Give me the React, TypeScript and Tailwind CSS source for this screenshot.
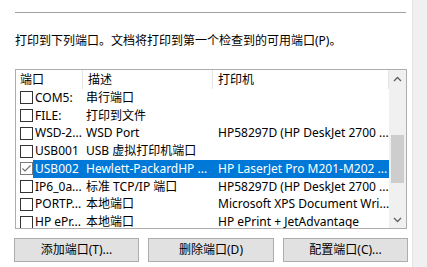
import React from "react";

type Row = {
  port: string;
  desc: string;
  printer: string;
  checked?: boolean;
  selected?: boolean;
};

const rows: Row[] = [
  { port: "COM5:", desc: "串行端口", printer: "" },
  { port: "FILE:", desc: "打印到文件", printer: "" },
  { port: "WSD-2...", desc: "WSD Port", printer: "HP58297D (HP DeskJet 2700 ..." },
  { port: "USB001", desc: "USB 虚拟打印机端口", printer: "" },
  {
    port: "USB002",
    desc: "Hewlett-PackardHP ...",
    printer: "HP LaserJet Pro M201-M202 ...",
    checked: true,
    selected: true,
  },
  { port: "IP6_0a...", desc: "标准 TCP/IP 端口", printer: "HP58297D (HP DeskJet 2700 ..." },
  { port: "PORTP...", desc: "本地端口", printer: "Microsoft XPS Document Wri..." },
  { port: "HP ePr...", desc: "本地端口", printer: "HP ePrint + JetAdvantage" },
];

function Checkbox({ checked }: { checked?: boolean }) {
  return (
    <span
      className={`flex h-[13px] w-[13px] shrink-0 items-center justify-center border bg-white ${
        checked ? "border-[#7a7a7a]" : "border-[#333333]"
      }`}
    >
      {checked && (
        <svg width="11" height="11" viewBox="0 0 11 11">
          <path d="M1.5 5.5 L4 8 L9.5 2.5" fill="none" stroke="#6d6d6d" strokeWidth="1.1" />
        </svg>
      )}
    </span>
  );
}

function Button({ label, width }: { label: string; width: string }) {
  return (
    <button
      className={`flex h-[24px] ${width} items-center justify-center border border-[#adadad] bg-[#e1e1e1] text-[12px] text-black`}
    >
      {label}
    </button>
  );
}

export default function App() {
  return (
    <div className="flex h-[267px] w-[427px] overflow-hidden bg-white font-['Noto_Sans','Noto_Sans_CJK_SC',sans-serif] text-[12px] leading-[16px] text-black">
      <div className="flex w-[412px] flex-col pt-[12px]">
        {/* separator */}
        <div className="ml-[15px] h-px w-[391px] bg-[#a0a0a0]" />

        <p className="ml-[15px] mt-[20px] whitespace-nowrap">
          打印到下列端口。文档将打印到第一个检查到的可用端口(P)。
        </p>

        {/* port list */}
        <div className="ml-[15px] mt-[20px] flex h-[160px] w-[392px] border border-[#adadad] bg-white">
          <div className="flex min-w-0 flex-1 flex-col overflow-hidden">
            {/* header */}
            <div className="flex h-[19px] shrink-0 items-center">
              <div className="flex h-full w-[67px] items-center border-r border-[#e5e5e5] pl-[4px]">端口</div>
              <div className="flex h-full w-[130px] items-center border-r border-[#e5e5e5] pl-[5px]">描述</div>
              <div className="flex h-full flex-1 items-center border-r border-[#e5e5e5] pl-[5px]">打印机</div>
            </div>
            {rows.map((r, i) => (
              <div key={i} className="flex h-[17.75px] shrink-0 items-center whitespace-nowrap">
                <div className="flex w-[17px] shrink-0 items-center pl-[4px]">
                  <Checkbox checked={r.checked} />
                </div>
                <div
                  className={`flex h-full flex-1 items-center ${
                    r.selected ? "bg-[#0078d7] text-white" : ""
                  }`}
                >
                  <span className="w-[50px] shrink-0 overflow-hidden pl-[2px]">{r.port}</span>
                  <span className="w-[131px] shrink-0 overflow-hidden pl-[3px]">{r.desc}</span>
                  <span className="flex-1 overflow-hidden pl-[4px]">{r.printer}</span>
                </div>
              </div>
            ))}
          </div>

          {/* scrollbar */}
          <div className="flex w-[17px] shrink-0 flex-col bg-[#f0f0f0]">
            <div className="flex h-[17px] items-center justify-center">
              <svg width="9" height="6" viewBox="0 0 9 6">
                <path d="M1 5 L4.5 1.5 L8 5" fill="none" stroke="#606060" strokeWidth="1.3" />
              </svg>
            </div>
            <div className="mt-[48px] ml-[2px] h-[48px] w-[13px] bg-[#cdcdcd]" />
            <div className="flex-1" />
            <div className="flex h-[17px] items-center justify-center">
              <svg width="9" height="6" viewBox="0 0 9 6">
                <path d="M1 1 L4.5 4.5 L8 1" fill="none" stroke="#606060" strokeWidth="1.3" />
              </svg>
            </div>
          </div>
        </div>

        {/* buttons */}
        <div className="ml-[14px] mt-[9px] flex gap-[9px]">
          <Button label="添加端口(T)..." width="w-[125px]" />
          <Button label="删除端口(D)" width="w-[126px]" />
          <Button label="配置端口(C)..." width="w-[125px]" />
        </div>
      </div>

      {/* right edge */}
      <div className="flex-1 border-l border-[#e3e3e3] bg-[#f0f0f0]" />
    </div>
  );
}
